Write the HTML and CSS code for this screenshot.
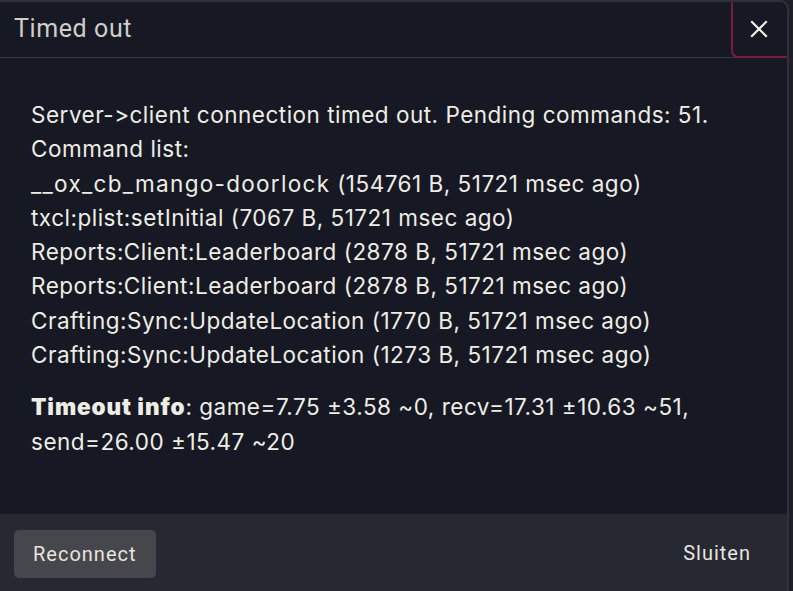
FILE: index.html
```html
<!DOCTYPE html>
<html lang="nl">
<head>
<meta charset="utf-8" />
<meta name="viewport" content="width=device-width, initial-scale=1" />
<title>Timed out</title>
<link rel="stylesheet" href="styles.css">
</head>
<body>
<div class="dialog">
  <!-- Kop -->
  <header class="dlg-head">
    <div class="dlg-title">Timed out</div>
    <button class="dlg-close" aria-label="Sluiten">
      <svg viewBox="0 0 20 20" width="20" height="20">
        <path d="M3 3 L17 17 M17 3 L3 17" stroke="#f4f2ea" stroke-width="2.2" stroke-linecap="square" fill="none"/>
      </svg>
    </button>
  </header>

  <!-- Inhoud -->
  <main class="dlg-body">
    <p class="msg">Server-&gt;client connection timed out. Pending commands: 51.<br>
Command list:<br>
<span class="cmd">__ox_cb_mango-doorlock</span> (154761 B, 51721 msec ago)<br>
txcl:plist:setInitial (7067 B, 51721 msec ago)<br>
Reports:Client:Leaderboard (2878 B, 51721 msec ago)<br>
Reports:Client:Leaderboard (2878 B, 51721 msec ago)<br>
Crafting:Sync:UpdateLocation (1770 B, 51721 msec ago)<br>
Crafting:Sync:UpdateLocation (1273 B, 51721 msec ago)</p>
    <p class="msg"><strong>Timeout info</strong>: game=7.75 ±3.58 ~0, recv=17.31 ±10.63 ~51,<br>
send=26.00 ±15.47 ~20</p>
  </main>

  <!-- Knoppen -->
  <footer class="dlg-foot">
    <button class="btn btn-primary">Reconnect</button>
    <button class="btn btn-link">Sluiten</button>
  </footer>
</div>
</body>
</html>
```

FILE: styles.css
```css
:root{--bg:#1d1f26;--panel:#161923;--foot:#262932;--line:#373a42;--fg:#eeede4;--accent:#7c1a3c}
html,body{margin:0;height:100%;background:var(--bg);overflow:hidden}
body{font-family:Inter,"Noto Sans",sans-serif;color:var(--fg)}

/* Dialog ragt links aus dem Bild */
.dialog{margin-left:-10px;width:799px;height:591px;background:var(--panel);border:2px solid #2e3139;border-bottom:none;border-radius:9px 9px 0 0;display:flex;flex-direction:column;box-sizing:border-box;overflow:hidden}

/* Kop */
.dlg-head{display:flex;align-items:stretch;justify-content:space-between;height:55px;border-bottom:1px solid var(--line);flex:none}
.dlg-title{font-family:Roboto,"Liberation Sans",sans-serif;font-size:25px;color:#cfcec8;padding:12px 0 0 22px;letter-spacing:.6px}
.dlg-close{width:56px;background:none;border:none;border-left:2px solid var(--accent);border-bottom:2px solid var(--accent);border-bottom-left-radius:7px;margin-bottom:-1px;display:flex;align-items:center;justify-content:center;padding:0 2px 0 0;cursor:pointer}

/* Inhoud */
.dlg-body{flex:1;padding:40px 0 0 39px}
.msg{margin:0 0 18px;font-size:22.5px;line-height:34.3px;letter-spacing:.5px}
.msg strong{font-weight:900;letter-spacing:.9px}
.cmd{letter-spacing:1.3px}

/* Knoppen */
.dlg-foot{height:77px;flex:none;background:var(--foot);display:flex;align-items:center;justify-content:space-between;padding:0 36px 0 22px}
.btn{font-family:Roboto,"Liberation Sans",sans-serif;font-size:20px;letter-spacing:1px;color:#e6e5de;border:none;cursor:pointer}
.btn-primary{background:#46474d;border-radius:5px;height:48px;padding:0 19px;margin-top:2px}
.btn-link{background:none;padding:0}
```
